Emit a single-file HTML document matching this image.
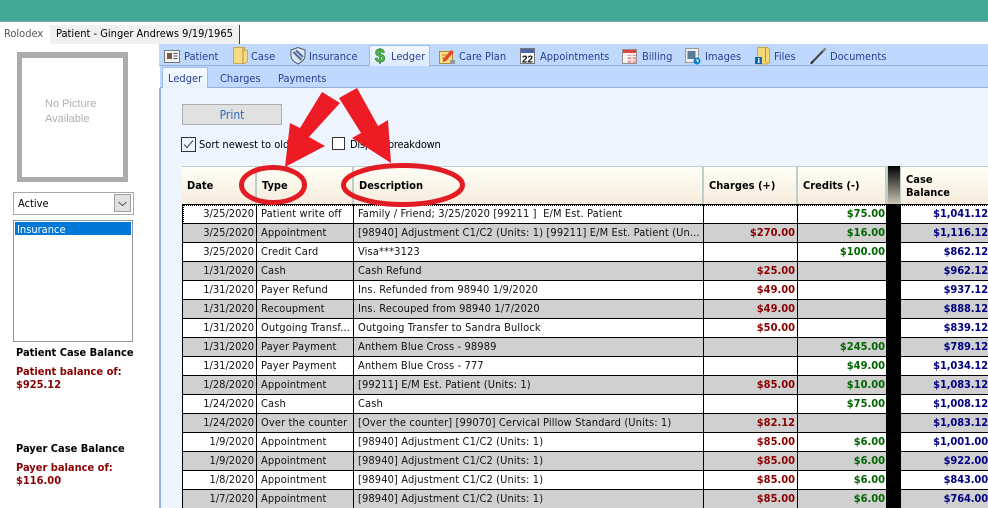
<!DOCTYPE html>
<html><head><meta charset="utf-8">
<style>
html,body{margin:0;padding:0;background:#fff}
#p{position:relative;width:988px;height:508px;overflow:hidden;background:#fff;font-family:"DejaVu Sans Condensed","DejaVu Sans","Liberation Sans",sans-serif;font-size:11px;color:#000}
.a{position:absolute;white-space:nowrap}
.t{color:#2b3f8f;top:50px;line-height:14px}
.b{font-weight:bold}
.i{position:absolute}
#g{position:absolute;left:182px;top:166px;width:806px;height:342px;overflow:hidden}
table{border-collapse:collapse;table-layout:fixed;width:806px;position:absolute;left:0;top:38px;letter-spacing:.12px}
td{height:18px;padding:0 3px 0 4px;border:1px solid #000;white-space:nowrap;overflow:hidden;line-height:17px;vertical-align:top;box-sizing:content-box;color:#111;background:#fff}
tr:nth-child(even) td{background:#d0d0d0}
td.d{text-align:right;padding-right:2px;letter-spacing:0}
td.c,td.r,td.n{text-align:right;font-weight:bold;padding-right:2px;letter-spacing:0;padding-left:0}
td.r{padding-right:1px}
td.n{padding-right:0;letter-spacing:-.1px}
td.c{color:#8b0000}td.r{color:#006400}td.n{color:#000080}
td.k,tr:nth-child(even) td.k{background:#000;padding:0}
.h{position:absolute;top:0;height:39px;background:linear-gradient(#fffff6,#f6ebdc);border-right:2px solid #bccfcb;border-top:1px solid #bccfcb;box-sizing:border-box;font-weight:bold;padding-left:5px;line-height:38px}
</style></head><body>
<div id="p">
<div class="a" style="left:0;top:0;width:988px;height:21px;background:#43a795;border-bottom:1px solid #7fa9a0"></div>

<div class="a" style="left:4px;top:27px;color:#555;line-height:14px">Rolodex</div>
<div class="a" style="left:50px;top:25px;width:189px;height:19px;background:#f0f0f0;border-right:1px solid #444"></div>
<div class="a" style="left:56px;top:27px;line-height:14px">Patient - Ginger Andrews 9/19/1965</div>

<div class="a" style="left:17px;top:52px;width:101px;height:119px;border:5px solid #acacac;border-top-width:6px;background:#fff"></div>
<div class="a" style="left:45px;top:97px;color:#b0b0b0;line-height:15px;font-family:'Liberation Sans',sans-serif;font-size:11px">No Picture<br>Available</div>

<div class="a" style="left:13px;top:192px;width:119px;height:21px;border:1px solid #a8a8a8;background:#fff"></div>
<div class="a" style="left:18px;top:197px;line-height:14px">Active</div>
<div class="a" style="left:114px;top:194px;width:15px;height:16px;border:1px solid #a0a0a0;background:#e1e1e1"></div>
<svg class="i" style="left:114px;top:194px" width="17" height="18"><path d="M4.500 8l4 3.500 4-3.500" fill="none" stroke="#555" stroke-width="1"/></svg>

<div class="a" style="left:13px;top:220px;width:118px;height:120px;border:1px solid #8f96a0;background:#fff"></div>
<div class="a" style="left:15px;top:222px;width:116px;height:13px;background:#0078d7;color:#fff;line-height:15px;padding-left:2px;box-sizing:border-box">Insurance</div>

<div class="a b" style="left:16px;top:346px;line-height:14px">Patient Case Balance</div>
<div class="a b" style="left:16px;top:365px;color:#8b0000;line-height:13px">Patient balance of:<br>$925.12</div>
<div class="a b" style="left:16px;top:442px;line-height:14px">Payer Case Balance</div>
<div class="a b" style="left:16px;top:461px;color:#8b0000;line-height:13px">Payer balance of:<br>$116.00</div>

<!-- panel -->
<div class="a" style="left:159px;top:44px;width:829px;height:22px;background:#bed9fd;border-bottom:1px solid #8fb0dc;box-sizing:border-box"></div>
<div class="a" style="left:160px;top:66px;width:828px;height:22px;background:#bed9fd;border-bottom:1px solid #8fb0dc;box-sizing:border-box"></div>
<div class="a" style="left:160px;top:88px;width:828px;height:420px;background:#eef5fe"></div>
<div class="a" style="left:159px;top:88px;width:2px;height:420px;background:#95b4e6"></div>

<div class="a" style="left:369px;top:45px;width:61px;height:21px;background:linear-gradient(#f2f8ff,#dcebfd);border:1px solid #9dbde8;border-bottom:0;box-sizing:border-box;border-radius:2px 2px 0 0"></div>
<div class="a" style="left:162px;top:67px;width:46px;height:21px;background:linear-gradient(#f4f9ff,#e8f2fe);border:1px solid #9dbde8;border-bottom:0;box-sizing:border-box;border-radius:2px 2px 0 0"></div>

<!-- tab icons -->
<svg class="i" style="left:164px;top:48px" width="17" height="17"><rect x=".5" y="2.500" width="15" height="12" fill="#f4f4f0" stroke="#777"/><rect x="3" y="5" width="5" height="6" fill="#7a5a50"/><path d="M9.500 5.500h4M9.500 8h4M9.500 10.500h4" stroke="#555"/></svg>
<svg class="i" style="left:233px;top:47px" width="16" height="18"><path d="M.5.5h11v3l3 0v11l-3 2h-11z" fill="#f6dc86" stroke="#c8a850"/><path d="M10 .5v16" stroke="#b8923a"/></svg>
<svg class="i" style="left:290px;top:47px" width="16" height="18"><path d="M1 3l7-2.500 7 2.500v6c0 4-4 6.500-7 8-3-1.500-7-4-7-8z" fill="#dfe6ee" stroke="#4a5a78"/><path d="M3.500 5l8 8M6 3.500l7 6.500" stroke="#4d6a9c" stroke-width="2"/></svg>
<svg class="i" style="left:372px;top:47px" width="16" height="18"><text x="8" y="15" text-anchor="middle" font-family="Liberation Sans" font-size="18" font-weight="bold" fill="#55b84a" stroke="#2f8a3a" stroke-width=".7">$</text></svg>
<svg class="i" style="left:439px;top:48px" width="17" height="17"><rect x=".5" y="3.500" width="13" height="12" fill="#f8e08a" stroke="#b88a30"/><path d="M4 11l8-9 3 2-8 9-3 1z" fill="#e8442c"/><path d="M3 7h6M3 10h4" stroke="#c8802c"/><rect x="11" y="12" width="5" height="4" fill="#999"/></svg>
<svg class="i" style="left:520px;top:48px" width="15" height="16"><rect x=".5" y=".5" width="14" height="15" fill="#fff" stroke="#777"/><rect x="1" y="1" width="13" height="4" fill="#4a66a8"/><text x="7.500" y="14.500" text-anchor="middle" font-family="Liberation Sans" font-size="10" font-weight="bold" fill="#111">22</text></svg>
<svg class="i" style="left:622px;top:49px" width="15" height="15"><rect x=".5" y=".5" width="14" height="14" fill="#f4eeee" stroke="#9a8a8a"/><rect x="1" y="1" width="13" height="3" fill="#d8483c"/><rect x="5" y="6" width="9" height="8" fill="#eda0a0"/><path d="M1 7.500h13M1 11h13M5 4v10M10 4v10" stroke="#fff"/></svg>
<svg class="i" style="left:685px;top:48px" width="16" height="17"><rect x=".5" y=".5" width="13" height="14" fill="#eee" stroke="#999"/><rect x="2.500" y="3" width="8" height="8" fill="#5d7a96"/><circle cx="12" cy="13" r="3.500" fill="#0f7fc8"/><path d="M11 12h2v1.500h-1" stroke="#fff" fill="none"/></svg>
<svg class="i" style="left:755px;top:47px" width="16" height="18"><path d="M2.500 10V.5h10l2 2v13l-3 1.500H2.500z" fill="#f6d878" stroke="#c8a850"/><path d="M10.500 .5v15" stroke="#b8923a"/><rect x="0" y="10" width="7" height="7" fill="#1268ae"/><rect x="3" y="11" width="1.500" height="1.500" fill="#fff"/><rect x="3" y="13" width="1.500" height="3" fill="#fff"/></svg>
<svg class="i" style="left:810px;top:47px" width="17" height="18"><path d="M1 16.500L13 4" stroke="#444" stroke-width="2"/><path d="M12 3l3-2.500 1.500 1.500L14 5z" fill="#888"/><path d="M1 17l1.500-3" stroke="#111"/></svg>

<!-- tab labels -->
<div class="a t" style="left:184px">Patient</div>
<div class="a t" style="left:251px">Case</div>
<div class="a t" style="left:309px">Insurance</div>
<div class="a t" style="left:391px">Ledger</div>
<div class="a t" style="left:459px">Care Plan</div>
<div class="a t" style="left:540px">Appointments</div>
<div class="a t" style="left:642px">Billing</div>
<div class="a t" style="left:705px">Images</div>
<div class="a t" style="left:774px">Files</div>
<div class="a t" style="left:830px">Documents</div>
<div class="a t" style="left:168px;top:72px">Ledger</div>
<div class="a t" style="left:220px;top:72px">Charges</div>
<div class="a t" style="left:278px;top:72px">Payments</div>

<!-- controls -->
<div class="a" style="left:182px;top:104px;width:100px;height:21px;background:#e1e1e1;border:1px solid #adadad;box-sizing:border-box;text-align:center;line-height:20px;color:#2a6dc0;font-size:12px">Print</div>
<div class="a" style="left:181px;top:137px;width:13px;height:13px;border:1px solid #333;background:#eef5fe"></div>
<svg class="i" style="left:181px;top:137px" width="15" height="15"><path d="M3 7.500l3 3 6-7" fill="none" stroke="#555" stroke-width="1.200"/></svg>
<div class="a" style="left:199px;top:138px;line-height:14px">Sort newest to oldest</div>
<div class="a" style="left:332px;top:137px;width:11px;height:11px;border:1px solid #333;background:#fff"></div>
<div class="a" style="left:350px;top:138px;line-height:14px;letter-spacing:-.22px">Display breakdown</div>

<!-- grid -->
<div id="g">
<div class="h" style="left:0;width:75px">Date</div>
<div class="h" style="left:75px;width:97px">Type</div>
<div class="h" style="left:172px;width:350px">Description</div>
<div class="h" style="left:522px;width:94px">Charges (+)</div>
<div class="h" style="left:616px;width:89px">Credits (-)</div>
<div class="h" style="left:705px;width:14px;background:linear-gradient(#000,#cfcabb);border:0;border-left:1px solid #bccfcb;border-right:1px solid #bccfcb"></div>
<div class="h" style="left:719px;width:87px;line-height:13px;padding-top:6px;border-right:0">Case<br>Balance</div>
<table>
<colgroup><col style="width:74px"><col style="width:97px"><col style="width:350px"><col style="width:94px"><col style="width:89px"><col style="width:14px"><col style="width:88px"></colgroup>
<tr style="outline:1px dotted #000;outline-offset:-1px"><td class="d">3/25/2020</td><td>Patient write off</td><td>Family / Friend; 3/25/2020 [99211 ]&nbsp; E/M Est. Patient</td><td class="c"></td><td class="r">$75.00</td><td class="k"></td><td class="n">$1,041.12</td></tr>
<tr><td class="d">3/25/2020</td><td>Appointment</td><td>[98940] Adjustment C1/C2 (Units: 1) [99211] E/M Est. Patient (Un...</td><td class="c">$270.00</td><td class="r">$16.00</td><td class="k"></td><td class="n">$1,116.12</td></tr>
<tr><td class="d">3/25/2020</td><td>Credit Card</td><td>Visa***3123</td><td class="c"></td><td class="r">$100.00</td><td class="k"></td><td class="n">$862.12</td></tr>
<tr><td class="d">1/31/2020</td><td>Cash</td><td>Cash Refund</td><td class="c">$25.00</td><td class="r"></td><td class="k"></td><td class="n">$962.12</td></tr>
<tr><td class="d">1/31/2020</td><td>Payer Refund</td><td>Ins. Refunded from 98940 1/9/2020</td><td class="c">$49.00</td><td class="r"></td><td class="k"></td><td class="n">$937.12</td></tr>
<tr><td class="d">1/31/2020</td><td>Recoupment</td><td>Ins. Recouped from 98940 1/7/2020</td><td class="c">$49.00</td><td class="r"></td><td class="k"></td><td class="n">$888.12</td></tr>
<tr><td class="d">1/31/2020</td><td>Outgoing Transf...</td><td>Outgoing Transfer to Sandra Bullock</td><td class="c">$50.00</td><td class="r"></td><td class="k"></td><td class="n">$839.12</td></tr>
<tr><td class="d">1/31/2020</td><td>Payer Payment</td><td>Anthem Blue Cross - 98989</td><td class="c"></td><td class="r">$245.00</td><td class="k"></td><td class="n">$789.12</td></tr>
<tr><td class="d">1/31/2020</td><td>Payer Payment</td><td>Anthem Blue Cross - 777</td><td class="c"></td><td class="r">$49.00</td><td class="k"></td><td class="n">$1,034.12</td></tr>
<tr><td class="d">1/28/2020</td><td>Appointment</td><td>[99211] E/M Est. Patient (Units: 1)</td><td class="c">$85.00</td><td class="r">$10.00</td><td class="k"></td><td class="n">$1,083.12</td></tr>
<tr><td class="d">1/24/2020</td><td>Cash</td><td>Cash</td><td class="c"></td><td class="r">$75.00</td><td class="k"></td><td class="n">$1,008.12</td></tr>
<tr><td class="d">1/24/2020</td><td>Over the counter</td><td>[Over the counter] [99070] Cervical Pillow Standard (Units: 1)</td><td class="c">$82.12</td><td class="r"></td><td class="k"></td><td class="n">$1,083.12</td></tr>
<tr><td class="d">1/9/2020</td><td>Appointment</td><td>[98940] Adjustment C1/C2 (Units: 1)</td><td class="c">$85.00</td><td class="r">$6.00</td><td class="k"></td><td class="n">$1,001.00</td></tr>
<tr><td class="d">1/9/2020</td><td>Appointment</td><td>[98940] Adjustment C1/C2 (Units: 1)</td><td class="c">$85.00</td><td class="r">$6.00</td><td class="k"></td><td class="n">$922.00</td></tr>
<tr><td class="d">1/8/2020</td><td>Appointment</td><td>[98940] Adjustment C1/C2 (Units: 1)</td><td class="c">$85.00</td><td class="r">$6.00</td><td class="k"></td><td class="n">$843.00</td></tr>
<tr><td class="d">1/7/2020</td><td>Appointment</td><td>[98940] Adjustment C1/C2 (Units: 1)</td><td class="c">$85.00</td><td class="r">$6.00</td><td class="k"></td><td class="n">$764.00</td></tr>
</table>
</div>

<!-- annotations -->
<svg class="i" style="left:0;top:0" width="988" height="508">
<polygon points="322,92 340,103 309,137 325,146 285,167 290,123 300,128" fill="#ed1c24"/>
<polygon points="357,88 339,98 361,133 352,138 391,163 388,120 378,126" fill="#ed1c24"/>
<ellipse cx="273" cy="185" rx="31.500" ry="17.500" fill="none" stroke="#e31b23" stroke-width="5"/>
<ellipse cx="403" cy="185" rx="59.500" ry="19.500" fill="none" stroke="#e31b23" stroke-width="5"/>
</svg>
</div>
</body></html>
